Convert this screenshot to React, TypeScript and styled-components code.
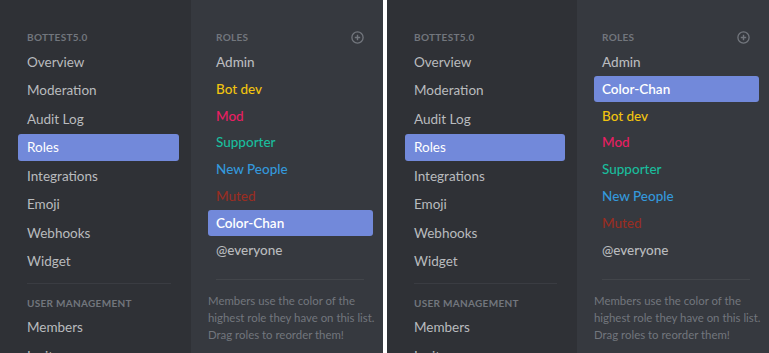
import styled, { createGlobalStyle } from "styled-components";

const GlobalStyle = createGlobalStyle`
  html, body {
    margin: 0;
    padding: 0;
    background: #ffffff;
  }
  body {
    font-family: Lato, "Noto Sans", sans-serif;
    -webkit-font-smoothing: antialiased;
  }
`;

const Page = styled.div`
  display: flex;
  gap: 4px;
  width: 769px;
  height: 353px;
  overflow: hidden;
  background: #ffffff;
`;

const Panel = styled.div<{ $width: number }>`
  display: flex;
  width: ${(p) => p.$width}px;
  height: 100%;
  flex-shrink: 0;
`;

const Sidebar = styled.nav<{ $width: number }>`
  width: ${(p) => p.$width}px;
  flex-shrink: 0;
  background: #2f3136;
  padding: 31px 12px 0 18px;
  box-sizing: border-box;
`;

const GroupHeader = styled.div`
  height: 12px;
  line-height: 12px;
  padding-left: 9px;
  margin-bottom: 5.5px;
  font-size: 10px;
  font-weight: 700;
  letter-spacing: 0.3px;
  text-transform: uppercase;
  color: #72767d;
`;

const NavItem = styled.div<{ $active?: boolean }>`
  height: 27px;
  line-height: 27px;
  margin-bottom: 1.5px;
  padding-left: 9px;
  border-radius: 3px;
  font-size: 13.5px;
  color: ${(p) => (p.$active ? "#ffffff" : "#b9bbbe")};
  background: ${(p) => (p.$active ? "#7289da" : "transparent")};
  white-space: nowrap;
`;

const SideDivider = styled.div`
  height: 1px;
  background: #3a3c42;
  margin: 8px 8px 12.5px 9px;
`;

const RolesPane = styled.section`
  flex: 1;
  background: #36393f;
  padding: 31px 10px 0 17px;
  box-sizing: border-box;
`;

const RolesHeader = styled.div`
  display: flex;
  align-items: center;
  justify-content: space-between;
  height: 12px;
  padding: 0 9px 0 8px;
  margin-bottom: 6px;
`;

const RolesTitle = styled.span`
  font-size: 10px;
  font-weight: 700;
  letter-spacing: 0.3px;
  color: #72767d;
`;

const RoleItem = styled.div<{ $color: string; $active?: boolean }>`
  height: 26px;
  line-height: 26px;
  margin-bottom: 0.8px;
  padding-left: 8px;
  border-radius: 3px;
  font-size: 13.5px;
  font-weight: ${(p) => (p.$active ? 600 : 500)};
  color: ${(p) => (p.$active ? "#ffffff" : p.$color)};
  background: ${(p) => (p.$active ? "#7289da" : "transparent")};
  white-space: nowrap;
`;

const RolesDivider = styled.div`
  height: 1px;
  background: #42454a;
  margin: 16px 9px 12px 8px;
`;

const Hint = styled.p`
  margin: 0 -8px 0 0;
  font-size: 11.4px;
  line-height: 17px;
  color: #72767d;
`;

const PlusIcon = () => (
  <svg width="13" height="13" viewBox="0 0 13 13">
    <circle cx="6.5" cy="6.5" r="5.6" fill="none" stroke="#72767d" strokeWidth="1.3" />
    <path d="M6.5 3.8v5.4M3.8 6.5h5.4" stroke="#72767d" strokeWidth="1.4" />
  </svg>
);

const settings = ["Overview", "Moderation", "Audit Log", "Roles", "Integrations", "Emoji", "Webhooks", "Widget"];

type Role = { name: string; color: string };

const ADMIN: Role = { name: "Admin", color: "#b9bbbe" };
const COLOR_CHAN: Role = { name: "Color-Chan", color: "#ffffff" };
const others: Role[] = [
  { name: "Bot dev", color: "#f1c40f" },
  { name: "Mod", color: "#e91e63" },
  { name: "Supporter", color: "#1abc9c" },
  { name: "New People", color: "#3498db" },
  { name: "Muted", color: "#992d22" },
];
const EVERYONE: Role = { name: "@everyone", color: "#b9bbbe" };

const ServerSettings = ({ width, sidebarWidth, roles }: { width: number; sidebarWidth: number; roles: Role[] }) => (
  <Panel $width={width}>
    <Sidebar $width={sidebarWidth}>
      <GroupHeader>BotTest5.0</GroupHeader>
      {settings.map((s) => (
        <NavItem key={s} $active={s === "Roles"}>
          {s}
        </NavItem>
      ))}
      <SideDivider />
      <GroupHeader>User Management</GroupHeader>
      <NavItem>Members</NavItem>
      <NavItem>Invites</NavItem>
    </Sidebar>
    <RolesPane>
      <RolesHeader>
        <RolesTitle>ROLES</RolesTitle>
        <PlusIcon />
      </RolesHeader>
      {roles.map((r) => (
        <RoleItem key={r.name} $color={r.color} $active={r.name === "Color-Chan"}>
          {r.name}
        </RoleItem>
      ))}
      <RolesDivider />
      <Hint>
        Members use the color of the highest role they have on this list. Drag roles to reorder them!
      </Hint>
    </RolesPane>
  </Panel>
);

export default function App() {
  return (
    <>
      <GlobalStyle />
      <Page>
        <ServerSettings width={383} sidebarWidth={191} roles={[ADMIN, ...others, COLOR_CHAN, EVERYONE]} />
        <ServerSettings width={382} sidebarWidth={190} roles={[ADMIN, COLOR_CHAN, ...others, EVERYONE]} />
      </Page>
    </>
  );
}
